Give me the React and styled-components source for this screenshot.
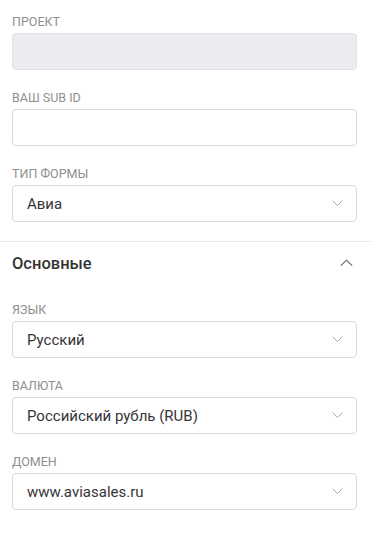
import React from 'react';
import styled, { createGlobalStyle } from 'styled-components';

const GlobalStyle = createGlobalStyle`
  html, body {
    margin: 0;
    padding: 0;
    background: #fff;
    font-family: Roboto, "Noto Sans", sans-serif;
  }
`;

const Page = styled.div`
  width: 371px;
  padding-top: 13px;
`;

const Group = styled.div`
  padding: 0 14px 0 12px;
`;

const Field = styled.div`
  margin-bottom: 19px;
`;

const Label = styled.div`
  font-size: 12.5px;
  line-height: 14px;
  padding-top: 2px;
  color: #8f8f8f;
  text-transform: uppercase;
  margin-bottom: 4px;
`;

const Box = styled.div`
  box-sizing: border-box;
  height: 37px;
  border: 1px solid ${(p) => (p.disabled ? '#e2e3e7' : '#dadada')};
  background: ${(p) => (p.disabled ? '#ebecf0' : '#fff')};
  border-radius: 4px;
  display: flex;
  align-items: center;
  justify-content: space-between;
  padding: 0 13px 0 14px;
  font-size: 15px;
  color: #363636;
`;

const Divider = styled.div`
  height: 1px;
  background: #e8e8e8;
`;

const SectionHead = styled.div`
  display: flex;
  align-items: center;
  justify-content: space-between;
  padding: 0 18px 0 12px;
  height: 42px;
  font-size: 16.5px;
  font-weight: 500;
  color: #333;
  margin-bottom: 17px;
`;

const Chevron = ({ up, color = '#a0a0a0', w = 11 }) => (
  <svg width={w} height={w / 2 + 1} viewBox="0 0 12 7" fill="none">
    <path
      d={up ? 'M1 6L6 1L11 6' : 'M1 1L6 6L11 1'}
      stroke={color}
      strokeWidth="1"
      strokeLinecap="round"
      strokeLinejoin="round"
    />
  </svg>
);

const Select = ({ label, value }) => (
  <Field>
    <Label>{label}</Label>
    <Box>
      <span>{value}</span>
      <Chevron />
    </Box>
  </Field>
);

export default function App() {
  return (
    <Page>
      <GlobalStyle />
      <Group>
        <Field>
          <Label>Проект</Label>
          <Box disabled />
        </Field>
        <Field>
          <Label>Ваш Sub ID</Label>
          <Box />
        </Field>
        <Select label="Тип формы" value="Авиа" />
      </Group>
      <Divider />
      <SectionHead>
        <span>Основные</span>
        <Chevron up color="#666" w={13} />
      </SectionHead>
      <Group>
        <Select label="Язык" value="Русский" />
        <Select label="Валюта" value="Российский рубль (RUB)" />
        <Select label="Домен" value="www.aviasales.ru" />
      </Group>
    </Page>
  );
}
